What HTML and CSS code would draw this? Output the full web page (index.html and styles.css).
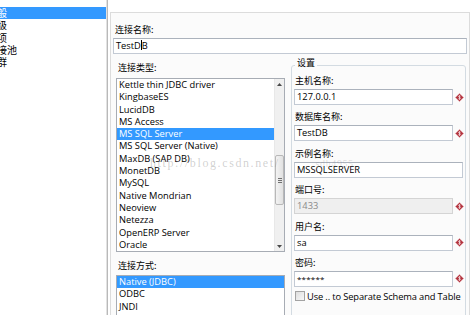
FILE: index.html
```html
<!DOCTYPE html>
<html>
<head>
<meta charset="utf-8">
<link rel="stylesheet" href="styles.css">
</head>
<body>
<div class="app">
  <nav class="nav">
    <div class="nav-item is-selected">一般</div>
    <div class="nav-item">高级</div>
    <div class="nav-item">选项</div>
    <div class="nav-item">连接池</div>
    <div class="nav-item">集群</div>
  </nav>
  <main class="panel">
    <div class="label label-name">连接名称:</div>
    <div class="textbox textbox-name">TestD<span class="caret"></span>B</div>
    <div class="columns">
      <div class="col-left">
        <div class="label label-type">连接类型:</div>
        <div class="listbox listbox-types">
          <ul class="list-items">
            <li>Kettle thin JDBC driver</li>
            <li>KingbaseES</li>
            <li>LucidDB</li>
            <li>MS Access</li>
            <li class="is-selected">MS SQL Server</li>
            <li>MS SQL Server (Native)</li>
            <li>MaxDB (SAP DB)</li>
            <li>MonetDB</li>
            <li>MySQL</li>
            <li>Native Mondrian</li>
            <li>Neoview</li>
            <li>Netezza</li>
            <li>OpenERP Server</li>
            <li>Oracle</li>
          </ul>
          <div class="scrollbar">
            <div class="sb-btn"><svg width="5" height="3" viewBox="0 0 5 3"><path d="M0 3L2.5 0L5 3Z" fill="#4a4a4a"/></svg></div>
            <div class="sb-track">
              <div class="sb-thumb"><span class="grip"></span></div>
            </div>
            <div class="sb-btn"><svg width="5" height="3" viewBox="0 0 5 3"><path d="M0 0L2.5 3L5 0Z" fill="#4a4a4a"/></svg></div>
          </div>
        </div>
        <div class="label label-access">连接方式:</div>
        <div class="listbox listbox-access">
          <ul class="list-items">
            <li class="is-selected">Native (JDBC)</li>
            <li>ODBC</li>
            <li>JNDI</li>
          </ul>
        </div>
      </div>
      <fieldset class="group">
        <legend class="group-title">设置</legend>
        <div class="field">
          <div class="label">主机名称:</div>
          <div class="field-row">
            <div class="textbox">127.0.0.1</div>
            <svg class="var-icon" width="9" height="9" viewBox="0 0 9 9"><path d="M4.5 0.4L8.6 4.5L4.5 8.6L0.4 4.5Z" fill="#b3343f" stroke="#e0a0a6" stroke-width="0.6"/><path d="M5.6 3.3C5.3 3 4.9 2.9 4.5 2.9C3.9 2.9 3.6 3.2 3.6 3.6C3.6 4.5 5.5 4.2 5.5 5.2C5.5 5.7 5.1 6 4.5 6C4 6 3.6 5.8 3.3 5.5M4.5 2.2V6.8" fill="none" stroke="#fff" stroke-width="0.6"/></svg>
          </div>
        </div>
        <div class="field">
          <div class="label">数据库名称:</div>
          <div class="field-row">
            <div class="textbox">TestDB</div>
            <svg class="var-icon" width="9" height="9" viewBox="0 0 9 9"><path d="M4.5 0.4L8.6 4.5L4.5 8.6L0.4 4.5Z" fill="#b3343f" stroke="#e0a0a6" stroke-width="0.6"/><path d="M5.6 3.3C5.3 3 4.9 2.9 4.5 2.9C3.9 2.9 3.6 3.2 3.6 3.6C3.6 4.5 5.5 4.2 5.5 5.2C5.5 5.7 5.1 6 4.5 6C4 6 3.6 5.8 3.3 5.5M4.5 2.2V6.8" fill="none" stroke="#fff" stroke-width="0.6"/></svg>
          </div>
        </div>
        <div class="field">
          <div class="label">示例名称:</div>
          <div class="field-row">
            <div class="textbox">MSSQLSERVER</div>
          </div>
        </div>
        <div class="field">
          <div class="label">端口号:</div>
          <div class="field-row">
            <div class="textbox is-disabled">1433</div>
            <svg class="var-icon" width="9" height="9" viewBox="0 0 9 9"><path d="M4.5 0.4L8.6 4.5L4.5 8.6L0.4 4.5Z" fill="#b3343f" stroke="#e0a0a6" stroke-width="0.6"/><path d="M5.6 3.3C5.3 3 4.9 2.9 4.5 2.9C3.9 2.9 3.6 3.2 3.6 3.6C3.6 4.5 5.5 4.2 5.5 5.2C5.5 5.7 5.1 6 4.5 6C4 6 3.6 5.8 3.3 5.5M4.5 2.2V6.8" fill="none" stroke="#fff" stroke-width="0.6"/></svg>
          </div>
        </div>
        <div class="field">
          <div class="label">用户名:</div>
          <div class="field-row">
            <div class="textbox">sa</div>
            <svg class="var-icon" width="9" height="9" viewBox="0 0 9 9"><path d="M4.5 0.4L8.6 4.5L4.5 8.6L0.4 4.5Z" fill="#b3343f" stroke="#e0a0a6" stroke-width="0.6"/><path d="M5.6 3.3C5.3 3 4.9 2.9 4.5 2.9C3.9 2.9 3.6 3.2 3.6 3.6C3.6 4.5 5.5 4.2 5.5 5.2C5.5 5.7 5.1 6 4.5 6C4 6 3.6 5.8 3.3 5.5M4.5 2.2V6.8" fill="none" stroke="#fff" stroke-width="0.6"/></svg>
          </div>
        </div>
        <div class="field">
          <div class="label">密码:</div>
          <div class="field-row">
            <div class="textbox textbox-pass">******</div>
            <svg class="var-icon" width="9" height="9" viewBox="0 0 9 9"><path d="M4.5 0.4L8.6 4.5L4.5 8.6L0.4 4.5Z" fill="#b3343f" stroke="#e0a0a6" stroke-width="0.6"/><path d="M5.6 3.3C5.3 3 4.9 2.9 4.5 2.9C3.9 2.9 3.6 3.2 3.6 3.6C3.6 4.5 5.5 4.2 5.5 5.2C5.5 5.7 5.1 6 4.5 6C4 6 3.6 5.8 3.3 5.5M4.5 2.2V6.8" fill="none" stroke="#fff" stroke-width="0.6"/></svg>
          </div>
        </div>
        <div class="check">
          <span class="checkbox"></span>
          <span class="check-text">Use .. to Separate Schema and Table</span>
        </div>
      </fieldset>
    </div>
  </main>
</div>
<div class="watermark">http://blog.csdn.net/<span class="wm-tail">sdh4955</span></div>
</body>
</html>
```

FILE: styles.css
```css
* { box-sizing: border-box; }
html, body { margin: 0; padding: 0; }
body {
  width: 474px;
  height: 315px;
  overflow: hidden;
  position: relative;
  background: #ffffff;
  color: #000;
  font-family: "Open Sans", "Noto Sans CJK SC", sans-serif;
  font-size: 9.3px;
}
.app {
  display: flex;
  height: 315px;
}
.nav {
  width: 108px;
  flex: none;
  padding-top: 7px;
  border-right: 1px solid #b9b9b9;
  box-shadow: inset -1px 0 0 #e2e2e2;
  overflow: hidden;
  font-family: "Noto Sans CJK SC", sans-serif;
  font-size: 10px;
}
.nav-item {
  height: 12.3px;
  line-height: 12.3px;
  text-indent: -13px;
  white-space: nowrap;
  margin-right: 1px;
}
.nav-item.is-selected { background: #3399ff; color: #fff; }

.panel {
  flex: 1;
  margin: 12px 4px 0 2px;
  padding: 11px 2px 0 2px;
  border: 1px solid #dcdcdc;
  border-bottom: none;
  background: #fbfbfb;
  min-width: 0;
}
.label {
  font-family: "Noto Sans CJK SC", sans-serif;
  font-size: 9px;
  line-height: 12px;
  height: 12px;
  white-space: nowrap;
}
.label-name { margin-left: 2px; }
.textbox {
  height: 16px;
  line-height: 14px;
  padding-left: 2px;
  border: 1px solid #c3cad4;
  border-top-color: #abb2bc;
  background: #fff;
  white-space: nowrap;
  overflow: hidden;
}
.textbox-name { margin-top: 2px; }
.caret {
  display: inline-block;
  width: 1px;
  height: 10px;
  background: #000;
  vertical-align: -1px;
}
.textbox.is-disabled { background: #efefef; border-color: #d4d4d4; color: #8a8a8a; }
.textbox-pass { font-size: 8px; letter-spacing: 0.2px; }

.columns {
  display: flex;
  gap: 6px;
  margin-top: 3px;
  padding-left: 3px;
  align-items: flex-start;
}
.col-left { width: 169px; flex: none; }
.label-type { margin-top: 5px; margin-left: 2px; }
.label-access { margin-top: 8px; margin-left: 2px; }

.listbox {
  border: 1px solid #a7acb4;
  background: #fff;
  display: flex;
}
.listbox-types { margin-top: 4px; height: 174px; }
.listbox-access { margin-top: 3px; height: 60px; }
.list-items {
  flex: 1;
  list-style: none;
  margin: 0;
  padding: 0;
  min-width: 0;
}
.list-items li {
  height: 12.3px;
  line-height: 12.3px;
  padding-left: 2px;
  white-space: nowrap;
}
.list-items li.is-selected { background: #3399ff; color: #fff; }

.scrollbar {
  width: 10px;
  flex: none;
  display: flex;
  flex-direction: column;
  background: #f0f0f0;
  border-left: 1px solid #e8e8e8;
}
.sb-btn {
  height: 10px;
  display: flex;
  align-items: center;
  justify-content: center;
}
.sb-track { flex: 1; }
.sb-thumb {
  margin-top: 66px;
  height: 50px;
  border: 1px solid #b8b8b8;
  border-radius: 2px;
  background: linear-gradient(to right, #f3f3f3, #e1e1e1);
  display: flex;
  align-items: center;
  justify-content: center;
}
.grip {
  width: 4px;
  height: 5px;
  background: repeating-linear-gradient(to bottom, #707070 0 1px, transparent 1px 2px);
}

.group {
  flex: 1;
  margin: 0 1px 0 0;
  padding: 2px 2px 20px 2px;
  min-width: 0;
  border: 1px solid #d3dbe2;
  border-radius: 3px;
}
.group-title {
  font-family: "Noto Sans CJK SC", sans-serif;
  font-size: 9px;
  line-height: 12px;
  padding: 0 2px 4px 2px;
  margin-left: 1px;
}
.field { margin-bottom: 6.4px; }
.field .label { margin-bottom: 2px; margin-left: 1px; }
.field-row {
  display: flex;
  align-items: center;
  gap: 2px;
}
.field-row .textbox { flex: 1; }
.var-icon { flex: none; width: 9px; height: 9px; margin-right: -1px; }

.check {
  margin-top: -3px;
  height: 12px;
  display: flex;
  align-items: center;
  gap: 2px;
  padding-left: 1px;
  white-space: nowrap;
}
.check-text { letter-spacing: -0.12px; }
.checkbox {
  width: 10px;
  height: 10px;
  flex: none;
  border: 1px solid #a3a3a3;
  background: linear-gradient(135deg, #dedede, #f7f7f7);
}

.watermark {
  position: absolute;
  left: 150px;
  top: 156px;
  font-family: "Liberation Serif", serif;
  font-size: 12px;
  letter-spacing: 1.6px;
  color: rgba(110, 110, 110, 0.32);
  pointer-events: none;
  white-space: nowrap;
}
.wm-tail {
  margin-left: 36px;
  font-size: 10px;
  letter-spacing: 0.6px;
  color: rgba(110, 110, 110, 0.22);
}
```
